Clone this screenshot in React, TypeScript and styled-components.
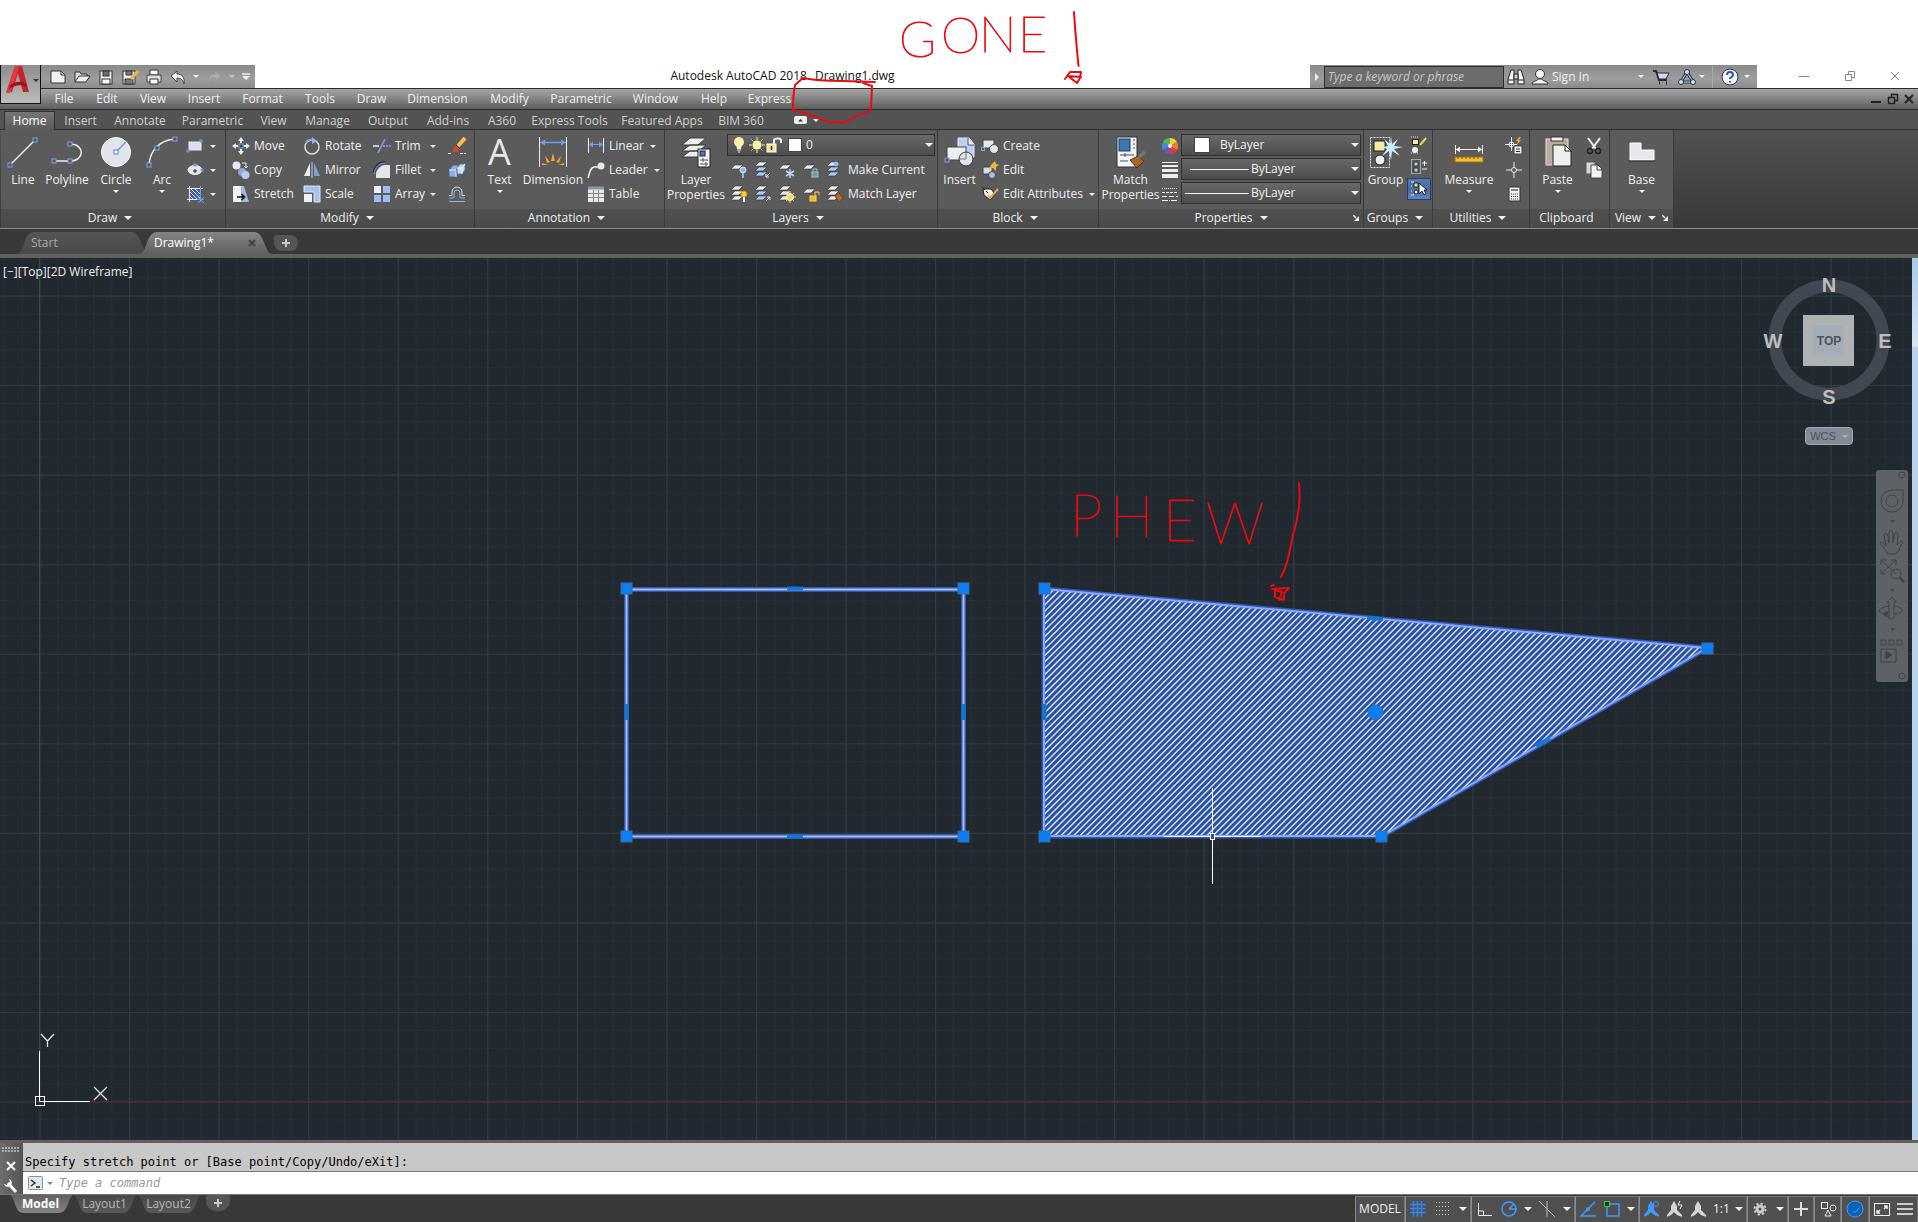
import React from "react";
import styled, { createGlobalStyle, css } from "styled-components";

const mono = `"DejaVu Sans Mono", "Liberation Mono", monospace`;

const Global = createGlobalStyle`
  *, *::before, *::after { box-sizing: border-box; }
  body { margin: 0; background: #fff; font: 12px/16px "Open Sans", "Noto Sans", sans-serif; overflow: hidden; }
  button, input, select { font: inherit; color: inherit; margin: 0; padding: 0; border: 0; background: none; }
  svg { display: block; flex: none; }
`;

/* ---------- shared parts ---------- */

const Page = styled.div`
  position: relative;
  display: flex;
  flex-direction: column;
  min-height: 100vh;
  color: #f0f0f0;
`;

const Caret = styled.span<{ $size?: number; $color?: string }>`
  flex: none;
  width: 0;
  height: 0;
  border: ${(p) => p.$size ?? 3}px solid transparent;
  border-top-color: ${(p) => p.$color ?? "#f0f0f0"};
  border-bottom-width: 0;
`;

const IconButton = styled.button<{ $w?: number; $active?: boolean }>`
  display: flex;
  align-items: center;
  justify-content: center;
  flex: none;
  width: ${(p) => p.$w ?? 24}px;
  height: 22px;
  ${(p) =>
    p.$active &&
    css`
      background: linear-gradient(#5377b5, #4a6ca6 50%, #5b86c9);
      border: 1px solid #2b3e63;
    `}
`;

const TextButton = styled.button<{ $w: number }>`
  flex: none;
  width: ${(p) => p.$w}px;
  text-align: center;
  white-space: nowrap;
`;

/* ---------- title bar ---------- */

const TitleBar = styled.header`
  display: flex;
  align-items: stretch;
  height: 88px;
  padding-top: 65px;
  background: #fff;
`;

const AppMenu = styled.button`
  position: absolute;
  z-index: 2;
  left: 0;
  top: 65px;
  display: flex;
  align-items: center;
  gap: 2px;
  width: 41px;
  height: 39px;
  padding: 0 0 8px 4px;
  border: 1px solid #111;
  border-top: 0;
  background: linear-gradient(#8d8d8d, #bcbcbc);
`;

const QuickAccess = styled.div`
  display: flex;
  align-items: center;
  width: 255px;
  padding-left: 46px;
  background: linear-gradient(#8a8a8a, #9d9d9d 60%, #8c8c8c);
`;

const WindowTitle = styled.h1`
  display: flex;
  flex: 1;
  align-items: center;
  justify-content: center;
  gap: 8px;
  margin: 0;
  padding-bottom: 2px;
  color: #111;
  font-size: 12px;
  font-weight: 400;
`;

const InfoCenter = styled.div`
  display: flex;
  align-items: center;
  width: 447px;
  background: linear-gradient(#8a8a8a, #9d9d9d 60%, #8c8c8c);
`;

const SearchBox = styled.input`
  width: 180px;
  height: 22px;
  padding: 0 3px;
  border: 1px solid #2d2d2d;
  background: #6c6c6c;
  &::placeholder { color: #c9c9c9; opacity: 1; font-style: italic; }
`;

const SignIn = styled.button`
  display: flex;
  align-items: center;
  justify-content: space-between;
  width: 92px;
`;

const Rule = styled.span`
  width: 1px;
  height: 22px;
  background: #aaa;
`;

const WindowControls = styled.div`
  display: flex;
  align-items: center;
  justify-content: space-between;
  width: 161px;
  padding: 0 17px 2px 41px;
`;

/* ---------- menu bar and ribbon ---------- */

const MenuBar = styled.nav`
  display: flex;
  align-items: center;
  height: 22px;
  padding: 0 2px 0 43px;
  border-top: 1px solid #2b2b2b;
  border-bottom: 1px solid #2b2b2b;
  background: linear-gradient(#a6a6a6, #5e5e5e);
`;

const MdiControls = styled.div`
  display: flex;
  margin-left: auto;
`;

const TabRow = styled.nav`
  display: flex;
  align-items: flex-end;
  height: 20px;
  padding-left: 4px;
  border-bottom: 1px solid #2e2e2e;
  background: #535353;
  color: #d0d0d0;
`;

const RibbonTab = styled(TextButton)<{ $active?: boolean }>`
  height: 18px;
  line-height: 16px;
  border: 1px solid transparent;
  border-bottom: 0;
  ${(p) =>
    p.$active &&
    css`
      height: 19px;
      margin-bottom: -1px;
      color: #fff;
      border-color: #303030;
      background: linear-gradient(#757575, #5b5b5b);
    `}
`;

const RibbonToggle = styled.button`
  display: flex;
  align-items: center;
  gap: 6px;
  height: 18px;
  margin-left: 22px;
`;

const Ribbon = styled.section`
  display: flex;
  height: 99px;
  padding-left: 1px;
  border-bottom: 1px solid #8a8a8a;
  background: linear-gradient(#505050, #393939);
`;

const PanelBox = styled.section<{ $w: number }>`
  display: flex;
  flex: none;
  flex-direction: column;
  width: ${(p) => p.$w}px;
  border-right: 1px solid #3b3b3b;
  background: #5b5b5b;
`;

const PanelBody = styled.div`
  display: flex;
  flex: 1;
  padding-top: 4px;
`;

const PanelTitle = styled.h2<{ $spread?: boolean }>`
  display: grid;
  grid-template-columns: ${(p) => (p.$spread ? "1fr auto 1fr" : "auto auto")};
  align-items: center;
  justify-content: center;
  column-gap: 6px;
  height: 19px;
  margin: 0;
  padding-bottom: 1px;
  font-size: 12px;
  font-weight: 400;
  background: linear-gradient(#4f4f4f, #4a4a4a);
`;

const PanelName = styled.span<{ $spread?: boolean }>`
  display: flex;
  align-items: center;
  gap: 7px;
  grid-column: ${(p) => (p.$spread ? 2 : 1)};
`;

const Launcher = styled.button<{ $spread?: boolean }>`
  justify-self: end;
  margin-right: ${(p) => (p.$spread ? 4 : 0)}px;
`;

const BigButton = styled.button<{ $w: number }>`
  display: flex;
  flex: none;
  flex-direction: column;
  align-items: center;
  width: ${(p) => p.$w}px;
  height: 72px;
  padding-top: 2px;
  line-height: 15px;
  white-space: nowrap;
  svg { margin-bottom: 4px; }
  ${Caret} { margin-top: 3px; }
`;

const LetterIcon = styled.span`
  height: 36px;
  color: #e8e8e8;
  font-size: 36px;
  line-height: 32px;
`;

const Column = styled.div<{ $w?: number; $ml?: number }>`
  display: flex;
  flex: none;
  flex-direction: column;
  width: ${(p) => (p.$w ? p.$w + "px" : "auto")};
  margin-left: ${(p) => p.$ml ?? 0}px;
`;

const ToolRow = styled.div`
  display: flex;
  align-items: center;
  height: 24px;
  gap: 6px;
  padding-left: 3px;
`;

const Tool = styled.button<{ $spread?: boolean }>`
  display: flex;
  align-items: center;
  gap: 4px;
  height: 24px;
  white-space: nowrap;
  ${Caret} { margin-left: ${(p) => (p.$spread ? "auto" : "2px")}; }
`;

const Combo = styled.label<{ $w: number }>`
  display: flex;
  align-items: center;
  width: ${(p) => p.$w}px;
  height: 22px;
  margin-bottom: 2px;
  padding: 0 1px 0 2px;
  border: 1px solid #2f2f2f;
  background: linear-gradient(#686868, #4d4d4d);
  select { flex: 1; min-width: 0; height: 20px; appearance: none; outline: 0; }
`;

const Swatch = styled.span<{ $size: number }>`
  flex: none;
  width: ${(p) => p.$size}px;
  height: ${(p) => p.$size}px;
  margin: 0 ${(p) => (p.$size > 14 ? 10 : 4)}px 0 ${(p) => (p.$size > 14 ? 10 : 4)}px;
  border: 1px solid #444;
  background: #fff;
`;

const LineSample = styled.span<{ $w: number }>`
  width: ${(p) => p.$w}px;
  height: 1px;
  margin: 0 2px 0 auto;
  background: #f4f4f4;
`;

const LineCombo = styled(Combo)`
  select { flex: none; width: 100px; }
`;

/* ---------- document tabs ---------- */

const DocTabs = styled.nav`
  display: flex;
  align-items: flex-end;
  height: 29px;
  padding-left: 17px;
  border-bottom: 4px solid #606060;
  background: #383838;
`;

const DocTab = styled.button<{ $active?: boolean }>`
  display: flex;
  align-items: center;
  justify-content: space-between;
  width: 132px;
  height: 22px;
  margin-right: -9px;
  padding: 0 15px 0 14px;
  color: ${(p) => (p.$active ? "#fff" : "#aaa")};
  background: ${(p) => (p.$active ? "linear-gradient(#858585, #606060)" : "linear-gradient(#565656, #484848)")};
  clip-path: path("M0 22 C7 21 6 0 17 0 H114 C125 0 124 21 132 22 Z");
`;

const AddTab = styled.button<{ $flip?: boolean }>`
  display: flex;
  align-items: center;
  justify-content: center;
  width: 24px;
  height: 16px;
  margin: ${(p) => (p.$flip ? "0 0 0 4px" : "0 0 3px 11px")};
  border-radius: ${(p) => (p.$flip ? "2px 2px 10px 10px" : "3px 10px 10px 10px")};
  background: #565656;
`;

/* ---------- workspace ---------- */

const Workspace = styled.main`
  display: flex;
  flex: 1;
  min-height: 0;
`;

const Canvas = styled.div`
  position: relative;
  flex: 1;
  overflow: hidden;
  background: #212830;
`;

const Drawing = styled.svg`
  position: absolute;
  inset: 0;
  width: 100%;
  height: 100%;
`;

const Backdrop = styled.div`
  width: 6px;
  background: linear-gradient(#a9c9ea, #d6e6f6 88px, #b9d3ee 90px, #b6d1ec);
`;

const ViewControls = styled.div`
  position: absolute;
  left: 3px;
  top: 6px;
  display: flex;
`;

const ViewCube = styled.div`
  position: absolute;
  right: 16px;
  top: 16px;
  display: flex;
  flex-direction: column;
  align-items: center;
  gap: 17px;
`;

const WcsButton = styled.button`
  display: flex;
  align-items: center;
  justify-content: center;
  gap: 6px;
  width: 48px;
  height: 18px;
  border: 1px solid #a3a8b0;
  border-radius: 4px;
  background: #858b96;
  color: #4a505a;
  font: 11px/14px "Liberation Sans", Arial, sans-serif;
`;

const NavBar = styled.div`
  position: absolute;
  right: 4px;
  top: 212px;
  display: flex;
  flex-direction: column;
  align-items: center;
  width: 32px;
  height: 212px;
  border-radius: 3px;
  background: #5e6267;
`;

/* ---------- command line and status ---------- */

const CommandLine = styled.section`
  display: flex;
  border-top: 3px solid #5f6164;
  border-bottom: 1px solid #777;
  font-family: ${mono};
  color: #000;
`;

const CommandGrip = styled.div`
  display: flex;
  flex-direction: column;
  align-items: center;
  justify-content: space-between;
  width: 23px;
  height: 51px;
  padding: 4px 2px 0 0;
  background: linear-gradient(90deg, #6d6d6d, #555);
`;

const CommandBody = styled.div`
  flex: 1;
  background: #fff;
`;

const History = styled.output`
  display: block;
  height: 29px;
  padding: 11px 0 0 2px;
  border-bottom: 1px solid #777;
  background: #c8c8c8;
`;

const Prompt = styled.label`
  display: flex;
  align-items: center;
  gap: 4px;
  height: 22px;
  padding-left: 5px;
  input { flex: 1; margin-left: 2px; outline: 0; }
  input::placeholder { color: #999; opacity: 1; font-style: italic; }
`;

const Footer = styled.footer`
  display: flex;
  align-items: flex-start;
  height: 27px;
  padding-left: 10px;
  background: #383838;
`;

const LayoutTab = styled.button<{ $active?: boolean }>`
  width: 70px;
  height: 18px;
  margin-right: -6px;
  padding-right: 9px;
  color: ${(p) => (p.$active ? "#fff" : "#b5b5b5")};
  font-weight: ${(p) => (p.$active ? 700 : 400)};
  background: ${(p) => (p.$active ? "linear-gradient(#606060, #858585)" : "linear-gradient(#484848, #585858)")};
  clip-path: path("M0 0 C6 4 4 18 14 18 H48 C59 18 57 4 63 0 Z");
`;

const StatusBar = styled.div`
  display: flex;
  height: 26px;
  margin: 1px 0 0 auto;
  background: #505050;
`;

const StatusGroup = styled.div<{ $w: number }>`
  display: flex;
  align-items: center;
  justify-content: space-around;
  width: ${(p) => p.$w}px;
  padding-bottom: 1px;
  border: 1px solid #777;
  border-bottom: 0;
  border-left-color: #8b8b8b;
`;

const Ink = styled.svg`
  position: absolute;
  z-index: 3;
  inset: 0;
  width: 100%;
  height: 100%;
  pointer-events: none;
  fill: none;
  stroke: #e80c12;
  stroke-width: 2;
  stroke-linecap: round;
  stroke-linejoin: round;
`;

const InkText = styled.text`
  fill: #e80c12;
  stroke-width: 1;
  font-family: Lato, "Open Sans", sans-serif;
  font-weight: 100;
`;

/* ---------- icons ---------- */

type IconProps = { s?: number; w?: number; h?: number; children: React.ReactNode };
const Icon = ({ s = 18, w, h, children }: IconProps) => (
  <svg width={w ?? s} height={h ?? s} viewBox={`0 0 ${w ?? s} ${h ?? s}`} fill="none" stroke="#eee" aria-hidden="true">
    {children}
  </svg>
);

const Node = ({ x, y, r = 2 }: { x: number; y: number; r?: number }) => (
  <rect x={x - r} y={y - r} width={r * 2} height={r * 2} fill="#4b5568" stroke="#7ea4ee" />
);

const LineIcon = () => (
  <Icon s={32}><path d="M3 29 L28 4" strokeWidth="1.5" /><Node x={3} y={29} /><Node x={28} y={4} /></Icon>
);
const PolylineIcon = () => (
  <Icon s={32}><path d="M3 25 H19 C34 25 34 8 19 8" strokeWidth="1.5" /><Node x={3} y={25} /><Node x={19} y={25} /><Node x={19} y={8} /></Icon>
);
const CircleIcon = () => (
  <Icon s={32}>
    <circle cx="16" cy="16" r="14.5" fill="#e2e4ea" stroke="#fff" />
    <path d="M16 16 L26 6" stroke="#6c94dc" strokeWidth="1.5" />
    <rect x="14" y="14" width="4" height="4" fill="#fff" stroke="#5580d0" />
  </Icon>
);
const ArcIcon = () => (
  <Icon s={32}><path d="M3 29 C4 14 14 4 29 3" strokeWidth="1.5" /><Node x={3} y={29} /><Node x={11} y={12} /><Node x={29} y={3} /></Icon>
);
const RectIcon = () => (
  <Icon><rect x="3" y="5" width="12" height="8" fill="#dcdfe6" /><Node x={2} y={14} r={1} /><Node x={15} y={4} r={1} /></Icon>
);
const EllipseIcon = () => (
  <Icon><ellipse cx="9" cy="9" rx="7" ry="4.5" fill="#e4e6ec" /><path d="M7 10h4M9 8v4" stroke="#222" /><Node x={9} y={4} r={1} /><Node x={16} y={9} r={1} /></Icon>
);
const HatchIcon = () => (
  <Icon>
    <rect x="4" y="4" width="10" height="10" fill="#3d63ab" stroke="none" />
    <path d="M5 4l9 9M9 4l5 5M4 7l7 7M4 11l3 3" stroke="#cfe0ff" />
    <path d="M1 3.5h16M3.5 1v16M1 14.5h12" />
    <path d="M14.5 1v16M11 14.5h7M12 12l6 6M18 12l-6 6" stroke="#6f9ee8" />
  </Icon>
);
const MoveIcon = () => (
  <Icon>
    <path d="M9 0l3 4H6zM9 18l3-4H6zM0 9l4-3v6zM18 9l-4-3v6z" fill="#e6e6e6" stroke="none" />
    <path d="M9 3v3M9 12v3M3 9h3M12 9h3" strokeWidth="2" />
    <rect x="7" y="7" width="4" height="4" fill="#345" stroke="#7ea4ee" />
  </Icon>
);
const CopyIcon = () => (
  <Icon>
    <circle cx="4.5" cy="4.5" r="4" fill="#e8e8e8" stroke="none" />
    <circle cx="10" cy="11" r="4" fill="#8ba6d8" stroke="none" />
    <circle cx="13.5" cy="14" r="4" fill="#b5cbf2" stroke="none" />
    <path d="M10 2h4v4M12 5l2 2 2-2" />
  </Icon>
);
const StretchIcon = () => (
  <Icon><path d="M1 1h8v16H1z" fill="#f2f2f2" stroke="none" /><path d="M9 1h3l5 16H9z" fill="#9db8e4" stroke="none" /><path d="M5 12h7M9.5 9l3 3-3 3" stroke="#111" strokeWidth="1.6" /></Icon>
);
const RotateIcon = () => (
  <Icon><circle cx="9" cy="10" r="7" stroke="#ddd" strokeWidth="1.5" /><path d="M3 5C5 2 9 2 11 4" stroke="#6f9ee8" strokeWidth="2" /><path d="M9 0l5 4-5 3z" fill="#8fb4f0" stroke="none" /></Icon>
);
const MirrorIcon = () => (
  <Icon><path d="M7 2v13H1z" fill="#eee" stroke="none" /><path d="M11 2v13h6z" fill="#7f9fd0" stroke="none" /><path d="M9 1v16" stroke="#b8d0f5" /></Icon>
);
const ScaleIcon = () => (
  <Icon><path d="M1 1h16v16h-6V7H1z" fill="#a9c2ec" stroke="#dce8ff" /><rect x="1" y="9" width="8" height="8" fill="#f0f0f0" stroke="none" /></Icon>
);
const TrimIcon = () => (
  <Icon><path d="M0 9h6" strokeWidth="1.5" /><path d="M5 16L12 2" stroke="#7ea4ee" strokeWidth="1.5" /><path d="M10 9h8" stroke="#7ea4ee" strokeWidth="1.5" strokeDasharray="2 1" /></Icon>
);
const FilletIcon = () => (
  <Icon><path d="M3 17v-4C3 9 8 4 12 4h5v13z" fill="#e6e6ea" stroke="none" /><path d="M1 12C1 6 6 1 12 1" stroke="#1e2c49" strokeWidth="2" /><path d="M1 13C2 6 6 2 12 2" stroke="#88aaea" /></Icon>
);
const ArrayIcon = () => (
  <Icon><rect x="1" y="1" width="7" height="7" fill="#f0f0f0" stroke="none" /><path d="M10 1h7v7h-7zM1 10h7v7H1zM10 10h7v7h-7z" fill="#9dbcf2" stroke="none" /></Icon>
);
const EraseIcon = () => (
  <Icon><path d="M17 1l-7 8" stroke="#f2c14a" strokeWidth="4" /><path d="M8 8l4 4-3 3H4z" fill="#e0432b" stroke="none" /><path d="M8 8l4 4" stroke="#222" /><path d="M0 16.5h4M12 16.5h6" strokeDasharray="3 1" /></Icon>
);
const ExplodeIcon = () => (
  <Icon>
    <path d="M1 9l4-5h6l-2 4v8H1z" fill="#8fb0df" stroke="#4a6288" /><path d="M1 9h7v7" stroke="#dce9ff" />
    <path d="M9 7l3-4h5v6l-3 4H9z" fill="#c4d7f4" stroke="#5b7298" /><path d="M9 7h5v6M14 7l3-4" stroke="#f0f5ff" />
  </Icon>
);
const OffsetIcon = () => (
  <Icon><path d="M1 16.5h16M1 13h4c2 0 1-2 1-5a3 3 0 0 1 6 0c0 3-1 5 1 5h4" stroke="#8fb4f0" /><path d="M1 10.500h3V7a5 5 0 0 1 10 0v3.500h3" stroke="#ddd" /></Icon>
);
const DimensionIcon = () => (
  <Icon s={32}>
    <path d="M2.5 1v30M29.5 1v30" />
    <path d="M3 6.5h26" stroke="#6f9ee8" strokeWidth="1.5" /><path d="M3 6.5l5-3v6zM29 6.5l-5-3v6z" fill="#6f9ee8" stroke="none" />
    <path d="M16 17l2 8h-4zM8 20l5 6-3 1zM24 20l-5 6 3 1zM5 27l6 2H5zM27 27l-6 2h6z" fill="#f5a623" stroke="none" />
  </Icon>
);
const LinearIcon = () => (
  <Icon><path d="M1.5 1v15M16.5 1v15" /><path d="M3 7.5h12" stroke="#6f9ee8" /><path d="M2 7.5l4-3v6zM16 7.5l-4-3v6z" fill="#6f9ee8" stroke="none" /></Icon>
);
const LeaderIcon = () => (
  <Icon><path d="M1 17c2-6 2-10 6-11h5" strokeWidth="1.5" /><circle cx="14" cy="5" r="3.5" fill="#e8e8e8" stroke="none" /></Icon>
);
const TableIcon = () => (
  <Icon><path d="M1 2h16v15H1z" fill="#e8e8e8" stroke="none" /><path d="M1 3h16" stroke="#8b97ab" strokeWidth="3" /><path d="M1 8.5h16M1 12.5h16M6.5 5v12M11.5 5v12" stroke="#888" /></Icon>
);
const Sheet = ({ x = 0, y = 0, fill = "#eee" }) => (
  <path d={`M${x + 4} ${y}h8l-4 4h-8z`} fill={fill} stroke="#333" strokeWidth=".6" />
);
const LayerPropsIcon = () => (
  <Icon s={32}>
    <path d="M10 15h16l-7 6H2zM10 9h16l-7 6H2zM10 2h16l-8 7H2z" fill="#eee" stroke="#3a3a3a" />
    <rect x="18" y="13" width="12" height="18" fill="#f4f4f4" stroke="#222" />
    <rect x="20" y="15" width="5" height="5" fill="#4d78bd" stroke="#223" /><path d="M20 24h8M20 28h8M23 22v4M26 26v4" stroke="#556" />
  </Icon>
);
const layerBadge: Record<string, React.ReactNode> = {
  pin: <><circle cx="13" cy="9" r="3" fill="#8fb8f5" stroke="#cfe2ff" /><path d="M13 12v5" stroke="#8fb8f5" strokeWidth="2" /></>,
  iso: <path d="M16 12l-4 4M12 13v3h3" />,
  snow: <path d="M12 8v9M8 10l8 5M8 15l8-5" stroke="#b7d6ff" strokeWidth="1.5" />,
  lock: <><rect x="10" y="11" width="6" height="5" fill="#6d9a91" stroke="#9cc" /><path d="M11 11V8h4v3" stroke="#9cc" /></>,
  bulb: <><circle cx="14" cy="9" r="3" fill="#ffc83d" stroke="#d98d12" /><path d="M14 12v5" stroke="#eee" strokeWidth="2" /></>,
  out: <path d="M12 16l4-4M13 12h3v3" />,
  sun: <><circle cx="12" cy="12" r="3.5" fill="#ffd84a" stroke="#fff" /><path d="M12 6v2M12 16v2M6 12h2M16 12h2M8 8l1 1M16 8l-1 1M8 16l1-1M16 16l-1-1" stroke="#ffd84a" /></>,
  unlock: <><rect x="8" y="11" width="6" height="5" fill="#e8b62c" stroke="#ffd84a" /><path d="M13 11V7h4v3" stroke="#ffd84a" /></>,
  current: <circle cx="10" cy="3" r="2.5" fill="#8fb8f5" stroke="none" />,
  match: <path d="M9 11l4-3 4 5-4 4z" fill="#b86a28" stroke="#7a3e10" />,
};
const LayerIcon = ({ kind, thin, tint = "#eee" }: { kind: string; thin?: boolean; tint?: string }) => (
  <Icon>
    {thin ? <Sheet x={1} y={4} /> : <><Sheet x={1} y={11} fill={tint} /><Sheet x={1} y={6} fill={tint} /><Sheet x={1} y={1} /></>}
    {layerBadge[kind]}
  </Icon>
);
const BulbIcon = () => (
  <Icon><circle cx="9" cy="6" r="5" fill="#ffeeaa" stroke="none" /><path d="M6 8h6l-1 5H7z" fill="#ffeeaa" stroke="none" /><path d="M7 14h4M8 16h2" /></Icon>
);
const SunIcon = () => (
  <Icon><circle cx="9" cy="9" r="4.5" fill="#fff0a8" stroke="none" /><path d="M9 1v3M9 14v3M1 9h3M14 9h3M3.5 3.5l2 2M12.5 12.5l2 2M14.5 3.5l-2 2M5.5 12.5l-2 2" stroke="#fff0a8" /></Icon>
);
const UnlockIcon = () => (
  <Icon><rect x="1" y="8" width="9" height="8" fill="#f6e08a" stroke="#fff" /><path d="M8 8V4c0-2 7-2 7 0v3" stroke="#f2f2f2" strokeWidth="2" /><path d="M5.5 10v4" stroke="#333" strokeWidth="1.5" /></Icon>
);
const InsertIcon = () => (
  <Icon s={32}>
    <path d="M14 2h11l5 6v13H14z" fill="#b9d0f2" stroke="#dce9ff" /><path d="M24 2v7h6" fill="#eaf2ff" stroke="#557" />
    <rect x="3" y="11" width="19" height="13" fill="#eceef2" stroke="#444" /><circle cx="22" cy="23" r="7" fill="#e0e3ea" stroke="#333" />
    <path d="M22 23v-7M22 23h-7" stroke="#777" /><Node x={3} y={24} />
  </Icon>
);
const CreateIcon = () => (
  <Icon><rect x="2" y="3" width="11" height="8" fill="#e6e8ee" stroke="#444" /><circle cx="13" cy="12" r="4.5" fill="#dfe2ea" stroke="#444" /><Node x={2} y={12} r={1.5} /></Icon>
);
const EditIcon = () => (
  <Icon><rect x="2" y="6" width="9" height="7" fill="#d8dce6" stroke="#444" /><circle cx="11" cy="14" r="3.5" fill="#a8c0ea" stroke="#444" /><path d="M14 0l1 3 3 1-3 2v4l-3-3-4 1 2-4z" fill="#f3b33d" stroke="none" /></Icon>
);
const AttrIcon = () => (
  <Icon><path d="M2 4h8l4 5-5 6-6-5z" fill="#f2f2f2" stroke="#222" /><path d="M5 6l2 2M1 2l3 3" stroke="#222" /><path d="M17 4l-8 9-2-3" stroke="#e6aa45" strokeWidth="2" /></Icon>
);
const MatchIcon = () => (
  <Icon s={32}>
    <rect x="2" y="1" width="20" height="30" fill="#f4f4f4" stroke="#333" /><rect x="4" y="3" width="11" height="12" fill="#3e75b5" stroke="#1d3b63" />
    <path d="M18 4h2M18 8h2M18 12h2M5 19h14M5 25h8M10 17v4" stroke="#446" />
    <path d="M15 24l8-4 6 5-7 7z" fill="#a8652a" stroke="#5e3410" /><path d="M24 21l6-5" stroke="#777" strokeWidth="3" />
  </Icon>
);
const WheelIcon = () => (
  <Icon s={16}>
    <g stroke="none">
      <path d="M8 8V0a8 8 0 0 1 7 4z" fill="#f4d33a" /><path d="M8 8l7-4a8 8 0 0 1 0 8z" fill="#ef7d2c" /><path d="M8 8l7 4a8 8 0 0 1-7 4z" fill="#d93a4a" />
      <path d="M8 8v8a8 8 0 0 1-7-4z" fill="#7350b8" /><path d="M8 8l-7 4a8 8 0 0 1 0-8z" fill="#3e8be0" /><path d="M8 8L1 4a8 8 0 0 1 7-4z" fill="#56b857" />
      <circle cx="8" cy="8" r="2" fill="#eee" />
    </g>
  </Icon>
);
const WeightIcon = () => (
  <Icon s={16}><path d="M0 .5h16" /><path d="M0 4h16" strokeWidth="2" /><path d="M0 8.500h16" strokeWidth="3" /><path d="M0 14h16" strokeWidth="4" /></Icon>
);
const LinetypeIcon = () => (
  <Icon s={16}><path d="M0 2.5h16" strokeDasharray="1 1" /><path d="M0 6.5h16" strokeDasharray="3 1" /><path d="M0 10.5h16" strokeDasharray="5 2" /><path d="M0 14.500h16" strokeDasharray="6 1 1 1" /></Icon>
);
const GroupIcon = () => (
  <Icon w={34} h={32}>
    <path d="M1.5 1.5h19v30h-19z" strokeDasharray="2 1" /><rect x="5" y="5" width="11" height="10" fill="#f3eba0" stroke="#222" />
    <circle cx="11" cy="24" r="5" fill="#eee" stroke="#222" />
    <path d="M22 0l1 8 6-5-4 7 9 1-9 2 6 7-8-5-1 9-2-9-7 5 5-7-5-2 6-1-4-7 6 5z" fill="#c5ecff" stroke="none" />
  </Icon>
);
const UngroupIcon = () => (
  <Icon><path d="M1 1h7M1 17h8" strokeDasharray="1 1" /><rect x="2.5" y="3.5" width="6" height="5" fill="#f3eba0" stroke="#222" /><circle cx="5" cy="14" r="3" fill="#eee" stroke="none" /><path d="M16 2l-6 7" stroke="#e9d36a" strokeWidth="2" /></Icon>
);
const GroupEditIcon = () => (
  <Icon><path d="M1.5 1.5h9v14h-9z" strokeDasharray="1 1" /><path d="M4 4h4v4H4zM4 10h4v4H4z" fill="#b9d3f7" stroke="#333" /><path d="M12 5h5M14.5 3v5M12 11h5" /></Icon>
);
const GroupSelIcon = () => (
  <Icon><path d="M1 2h3M1 6h1M1 11h1M1 15h3" /><path d="M4 3h4v4H4z" fill="#f3eba0" stroke="#222" /><circle cx="6" cy="12" r="2" fill="#eee" stroke="#222" /><path d="M9 3v11l3-3 2 4 2-1-2-4h3z" fill="#fff" stroke="#222" /></Icon>
);
const MeasureIcon = () => (
  <Icon s={32}><path d="M2.5 9v9M29.5 9v9M3 13.5h26" /><path d="M3 13.5l4-3v6zM29 13.5l-4-3v6z" fill="#eee" stroke="none" /><rect x="2" y="21" width="28" height="5" fill="#f4bf35" stroke="#a86f10" /><path d="M5 21v2M9 21v2M13 21v2M17 21v2M21 21v2M25 21v2" stroke="#7c5208" /></Icon>
);
const QuickSelectIcon = () => (
  <Icon><path d="M6.5 0v14M0 7.5h12" /><circle cx="6.5" cy="7.5" r="2.5" /><path d="M14 0l-3 4h2l-1 4 4-5h-2l2-3z" fill="#f5a03a" stroke="none" /><rect x="9" y="9" width="8" height="8" fill="#eee" stroke="#444" /><path d="M11 12h4M11 14.5h4" stroke="#333" /></Icon>
);
const PointIcon = () => (
  <Icon><path d="M9 1v5M9 12v5M1 9h5M12 9h5" /><circle cx="9" cy="9" r="2.5" /></Icon>
);
const CalcIcon = () => (
  <Icon><rect x="4" y="2" width="11" height="14" fill="#eee" stroke="#333" /><rect x="6" y="4" width="7" height="2" fill="#888" stroke="none" /><path d="M6 9h7M6 11.5h7M6 14h7" stroke="#444" strokeDasharray="1 1" /></Icon>
);
const PasteIcon = () => (
  <Icon s={32}><rect x="4" y="3" width="22" height="26" fill="#b9ada0" stroke="#e8e0d8" /><rect x="9" y="1" width="12" height="4" fill="#f4f4f4" stroke="#333" /><path d="M11 9h12l6 6v15H11z" fill="#eee" stroke="#222" /><path d="M23 9v6h6" stroke="#222" /></Icon>
);
const CutIcon = () => (
  <Icon><path d="M3 1l8 11M15 1L7 12" strokeWidth="2" /><circle cx="5" cy="14" r="2.5" stroke="#222" strokeWidth="1.5" /><circle cx="13" cy="14" r="2.5" stroke="#222" strokeWidth="1.5" /></Icon>
);
const PagesIcon = () => (
  <Icon><path d="M1 1h9v12H1z" fill="#d8d8d8" stroke="#555" /><path d="M6 4h7l4 4v9H6z" fill="#f4f4f4" stroke="#444" /><path d="M12 4v5h5" stroke="#444" /></Icon>
);
const BaseIcon = () => (
  <Icon s={32}><path d="M4 7h11v7h13v10H4z" fill="#e6e7ea" stroke="#fff" /><path d="M3 25h26" stroke="#333" /></Icon>
);
const LaunchIcon = () => (
  <Icon s={6}><path d="M0 0l3 3" strokeWidth="1.5" /><path d="M6 1v5H1z" fill="#eee" stroke="none" /></Icon>
);

const Logo = () => (
  <Icon w={26} h={30}>
    <g stroke="none">
      <path d="M10 1h7l7 26h-6l-5-19-6 19-6 1z" fill="#c5222a" />
      <path d="M10 1h4L6 27l-5 1z" fill="#e23a3c" /><path d="M5 20c6-4 11-4 16-2l1 4c-6-3-12-2-18 2z" fill="#9d141c" />
    </g>
  </Icon>
);
const NewIcon = () => (<Icon><path d="M2 3h10l4 4v8H2z" fill="#f2f2f2" stroke="#333" /><path d="M12 3v4h4" stroke="#333" /></Icon>);
const OpenIcon = () => (<Icon><path d="M2 14V4h5l1 2h6v2" fill="#ddd" stroke="#333" /><path d="M2 14l4-6h11l-4 6z" fill="#f0f0f0" stroke="#333" /></Icon>);
const SaveIcon = () => (<Icon><rect x="3" y="3" width="12" height="13" fill="#eee" stroke="#333" /><rect x="6" y="3" width="6" height="5" fill="#666b75" stroke="#333" /><rect x="5" y="11" width="8" height="5" fill="#fff" stroke="#333" /></Icon>);
const SaveAsIcon = () => (<Icon><rect x="2" y="3" width="12" height="13" fill="#eee" stroke="#333" /><path d="M5 3h6v4H5zM4 11h8v5H4z" fill="#777b85" stroke="#333" /><path d="M17 3l-7 8" stroke="#f2b440" strokeWidth="3" /></Icon>);
const PrintIcon = () => (<Icon><path d="M5 2h8v5H5z" fill="#fff" stroke="#333" /><path d="M2 7h14v7H2z" fill="#ddd" stroke="#444" /><path d="M5 11h8v5H5z" fill="#fff" stroke="#333" /></Icon>);
const UndoIcon = ({ flip, c = "#f0f0f0" }: { flip?: boolean; c?: string }) => (
  <Icon><path transform={flip ? "translate(18 0) scale(-1 1)" : undefined} d="M8 3v3c5 0 8 3 7 10-1-4-3-6-7-6v4L2 8z" fill={c} stroke={flip ? "#999" : "#444"} /></Icon>
);
const BinocularsIcon = () => (
  <Icon><path d="M3 5l1-3h3v14H1v-5zM15 5l-1-3h-3v14h6v-5z" fill="#f2f2f2" stroke="#222" /><path d="M7 6h4v5H7z" fill="#ccc" stroke="#222" /><path d="M1 12h6M11 12h6" stroke="#222" /></Icon>
);
const PersonIcon = () => (<Icon><circle cx="9" cy="6" r="4.5" fill="#f2f2f2" stroke="#333" /><path d="M1 16c1-4 5-2 6-5h4c1 3 5 1 6 5z" fill="#f2f2f2" stroke="#333" /></Icon>);
const CartIcon = () => (<Icon><path d="M1 3h3l3 9h8" stroke="#222a3d" strokeWidth="2" /><path d="M5 5h12l-3 6H7z" fill="#cfd8e8" stroke="#222a3d" /><path d="M7 15h1M14 15h1" stroke="#222a3d" strokeWidth="3" /></Icon>);
const A360Icon = () => (
  <Icon>
    <path d="M9 4l6 10H3z" stroke="#27324c" strokeWidth="3" /><path d="M9 4l6 10H3z" stroke="#d5deef" />
    <g fill="#d5deef" stroke="#27324c"><circle cx="9" cy="4" r="2.500" /><circle cx="3" cy="14" r="2.500" /><circle cx="15" cy="14" r="2.500" /></g>
  </Icon>
);
const HelpIcon = () => (
  <Icon><circle cx="9" cy="9" r="8" fill="#f2f4fa" stroke="#26334f" /><path d="M6 7c0-4 6-4 6 0 0 2-3 2-3 4M9 13v1.5" stroke="#2c54b5" strokeWidth="2" /></Icon>
);

const CrossIcon = ({ c = "#fff", s = 12, sw = 2 }: { c?: string; s?: number; sw?: number }) => (
  <Icon s={s}><path d={`M2 2L${s - 2} ${s - 2}M${s - 2} 2L2 ${s - 2}`} stroke={c} strokeWidth={sw} /></Icon>
);
const RestoreIcon = ({ c, sw = 1 }: { c: string; sw?: number }) => (
  <Icon s={12}><path d="M1.5 4.5h6v6h-6zM4.5 4V1.5h6v6H8" stroke={c} strokeWidth={sw} /></Icon>
);
const MinIcon = ({ c, sw = 1 }: { c: string; sw?: number }) => (
  <Icon s={12}><path d={`M1 ${sw > 1 ? 9 : 6.5}h10`} stroke={c} strokeWidth={sw} /></Icon>
);
const PlusIcon = ({ s = 10, c = "#c8c8c8" }: { s?: number; c?: string }) => (
  <Icon s={s}><path d={`M${s / 2} 1v${s - 2}M1 ${s / 2}h${s - 2}`} stroke={c} strokeWidth="2" /></Icon>
);

/* ---------- ribbon content ---------- */

type PanelProps = { title: string; w: number; caret?: boolean; launch?: "end" | "inline"; children: React.ReactNode };
const Panel = ({ title, w, caret = true, launch, children }: PanelProps) => {
  const spread = launch === "end";
  return (
    <PanelBox $w={w}>
      <PanelBody>{children}</PanelBody>
      <PanelTitle $spread={spread}>
        <PanelName $spread={spread}>
          {title}
          {caret && <Caret $size={4} />}
        </PanelName>
        {launch && <Launcher $spread={spread} aria-label={`${title} settings`}><LaunchIcon /></Launcher>}
      </PanelTitle>
    </PanelBox>
  );
};

type BigProps = { icon: React.ReactNode; lines: string[]; w: number; caret?: boolean };
const Big = ({ icon, lines, w, caret }: BigProps) => (
  <BigButton $w={w}>
    {icon}
    {lines.map((l) => <span key={l}>{l}</span>)}
    {caret && <Caret />}
  </BigButton>
);

type SmallProps = { icon: React.ReactNode; label?: string; name?: string; caret?: boolean; spread?: boolean };
const Small = ({ icon, label, name, caret, spread }: SmallProps) => (
  <Tool aria-label={label ? undefined : name} $spread={spread}>
    {icon}
    {label}
    {caret && <Caret />}
  </Tool>
);

const menus: [string, number][] = [
  ["File", 42], ["Edit", 44], ["View", 48], ["Insert", 54], ["Format", 63], ["Tools", 52], ["Draw", 51],
  ["Dimension", 81], ["Modify", 63], ["Parametric", 80], ["Window", 69], ["Help", 48], ["Express", 63],
];

const tabs: [string, number][] = [
  ["Home", 51], ["Insert", 51], ["Annotate", 68], ["Parametric", 77], ["View", 45], ["Manage", 63], ["Output", 58],
  ["Add-ins", 62], ["A360", 46], ["Express Tools", 89], ["Featured Apps", 96], ["BIM 360", 62],
];

const RibbonPanels = () => (
  <Ribbon>
    <Panel title="Draw" w={225}>
      <Big icon={<LineIcon />} lines={["Line"]} w={44} />
      <Big icon={<PolylineIcon />} lines={["Polyline"]} w={44} />
      <Big icon={<CircleIcon />} lines={["Circle"]} w={54} caret />
      <Big icon={<ArcIcon />} lines={["Arc"]} w={38} caret />
      <Column $ml={5}>
        <Small icon={<RectIcon />} name="Rectangle" caret />
        <Small icon={<EllipseIcon />} name="Ellipse" caret />
        <Small icon={<HatchIcon />} name="Hatch" caret />
      </Column>
    </Panel>
    <Panel title="Modify" w={249}>
      <Column $w={71} $ml={6}>
        <Small icon={<MoveIcon />} label="Move" />
        <Small icon={<CopyIcon />} label="Copy" />
        <Small icon={<StretchIcon />} label="Stretch" />
      </Column>
      <Column $w={70}>
        <Small icon={<RotateIcon />} label="Rotate" />
        <Small icon={<MirrorIcon />} label="Mirror" />
        <Small icon={<ScaleIcon />} label="Scale" />
      </Column>
      <Column $w={63}>
        <Small icon={<TrimIcon />} label="Trim" caret spread />
        <Small icon={<FilletIcon />} label="Fillet" caret spread />
        <Small icon={<ArrayIcon />} label="Array" caret spread />
      </Column>
      <Column $ml={12}>
        <Small icon={<EraseIcon />} name="Erase" />
        <Small icon={<ExplodeIcon />} name="Explode" />
        <Small icon={<OffsetIcon />} name="Offset" />
      </Column>
    </Panel>
    <Panel title="Annotation" w={190}>
      <Big icon={<LetterIcon aria-hidden="true">A</LetterIcon>} lines={["Text"]} w={49} caret />
      <Big icon={<DimensionIcon />} lines={["Dimension"]} w={58} />
      <Column $ml={5}>
        <Small icon={<LinearIcon />} label="Linear" caret />
        <Small icon={<LeaderIcon />} label="Leader" caret />
        <Small icon={<TableIcon />} label="Table" />
      </Column>
    </Panel>
    <Panel title="Layers" w={273}>
      <Big icon={<LayerPropsIcon />} lines={["Layer", "Properties"]} w={62} />
      <Column>
        <Combo $w={208}>
          <BulbIcon /><SunIcon /><UnlockIcon /><Swatch $size={14} />
          <select aria-label="Current layer"><option>0</option></select>
          <Caret $size={4} />
        </Combo>
        <ToolRow>
          <LayerIcon kind="pin" thin /><LayerIcon kind="iso" tint="#a9c8f5" /><LayerIcon kind="snow" thin /><LayerIcon kind="lock" thin />
          <Small icon={<LayerIcon kind="current" tint="#a9c8f5" />} label="Make Current" />
        </ToolRow>
        <ToolRow>
          <LayerIcon kind="bulb" /><LayerIcon kind="out" tint="#a9c8f5" /><LayerIcon kind="sun" /><LayerIcon kind="unlock" thin />
          <Small icon={<LayerIcon kind="match" />} label="Match Layer" />
        </ToolRow>
      </Column>
    </Panel>
    <Panel title="Block" w={161}>
      <Big icon={<InsertIcon />} lines={["Insert"]} w={43} />
      <Column>
        <Small icon={<CreateIcon />} label="Create" />
        <Small icon={<EditIcon />} label="Edit" />
        <Small icon={<AttrIcon />} label="Edit Attributes" caret />
      </Column>
    </Panel>
    <Panel title="Properties" w={265} launch="end">
      <Big icon={<MatchIcon />} lines={["Match", "Properties"]} w={63} />
      <Column $w={19}>
        <Small icon={<WheelIcon />} name="Object color" />
        <Small icon={<WeightIcon />} name="Lineweight" />
        <Small icon={<LinetypeIcon />} name="Linetype" />
      </Column>
      <Column>
        <Combo $w={180}><Swatch $size={16} /><select aria-label="Color"><option>ByLayer</option></select><Caret $size={4} /></Combo>
        <LineCombo $w={180}><LineSample $w={59} /><select aria-label="Lineweight"><option>ByLayer</option></select><Caret $size={4} /></LineCombo>
        <LineCombo $w={180}><LineSample $w={64} /><select aria-label="Linetype"><option>ByLayer</option></select><Caret $size={4} /></LineCombo>
      </Column>
    </Panel>
    <Panel title="Groups" w={69}>
      <Big icon={<GroupIcon />} lines={["Group"]} w={43} />
      <Column>
        <IconButton aria-label="Ungroup"><UngroupIcon /></IconButton>
        <IconButton aria-label="Group edit"><GroupEditIcon /></IconButton>
        <IconButton aria-label="Group selection" $active><GroupSelIcon /></IconButton>
      </Column>
    </Panel>
    <Panel title="Utilities" w={97}>
      <Big icon={<MeasureIcon />} lines={["Measure"]} w={72} caret />
      <Column>
        <Small icon={<QuickSelectIcon />} name="Quick select" />
        <Small icon={<PointIcon />} name="Point style" />
        <Small icon={<CalcIcon />} name="Quick calculator" />
      </Column>
    </Panel>
    <Panel title="Clipboard" w={80} caret={false}>
      <Big icon={<PasteIcon />} lines={["Paste"]} w={55} caret />
      <Column>
        <Small icon={<CutIcon />} name="Cut" />
        <Small icon={<PagesIcon />} name="Copy clip" />
      </Column>
    </Panel>
    <Panel title="View" w={64} launch="inline">
      <Big icon={<BaseIcon />} lines={["Base"]} w={63} caret />
    </Panel>
  </Ribbon>
);

/* ---------- model space ---------- */

const ORIGIN = { x: 39.5, y: 843.5 };
const MAJOR = 89.55;
const HATCH_STEP = 19 / 3;
const hatchLines = Array.from({ length: 150 }, (_, i) => {
  const x = 1040 + i * HATCH_STEP;
  return `M${x.toFixed(2)} 320L${(x - 270).toFixed(2)} 590`;
}).join("");
const SHAPE = "M1044 331L1707 390L1382 578H1044Z";

const Grip = ({ x, y }: { x: number; y: number }) => (
  <rect x={x - 5.5} y={y - 5.5} width="11" height="11" fill="#0a7ff5" stroke="#3d6c9c" />
);
const EdgeGrip = ({ x, y, a = 0 }: { x: number; y: number; a?: number }) => (
  <rect x={x - 8} y={y - 2} width="16" height="4" fill="#1676d6" transform={`rotate(${a} ${x} ${y})`} />
);

const ModelSpace = () => (
  <Drawing aria-label="Model space">
    <defs>
      <pattern id="minor" x={ORIGIN.x} y={ORIGIN.y} width={MAJOR / 5} height={MAJOR / 5} patternUnits="userSpaceOnUse">
        <path d={`M.5 0V${MAJOR}M0 .5H${MAJOR}`} stroke="#262e36" />
      </pattern>
      <pattern id="major" x={ORIGIN.x} y={ORIGIN.y} width={MAJOR} height={MAJOR} patternUnits="userSpaceOnUse">
        <path d={`M.5 0V${MAJOR}M0 .5H${MAJOR}`} stroke="#323b43" />
      </pattern>
      <clipPath id="shape"><path d={SHAPE} /></clipPath>
    </defs>
    <rect width="100%" height="100%" fill="url(#minor)" />
    <rect width="100%" height="100%" fill="url(#major)" />
    <path d="M39.5 0V843" stroke="#27592f" />
    <path d="M39 843.5H1912" stroke="#5c2833" />

    <g fill="none">
      <rect x="626.5" y="331.5" width="337" height="247" stroke="#2f55a8" strokeWidth="5" />
      <rect x="626.5" y="331.5" width="337" height="247" stroke="#a9c0ff" strokeWidth="2" />
      <path d={SHAPE} fill="#2b509f" stroke="#3359b0" strokeWidth="5" />
      <g clipPath="url(#shape)"><path d={hatchLines} stroke="#cfe0ff" strokeWidth="1.5" /></g>
      <path d={SHAPE} stroke="#86a6ff" strokeWidth="2" />
    </g>
    <EdgeGrip x={795} y={330.5} /><EdgeGrip x={795} y={578.5} />
    <EdgeGrip x={626.5} y={454} a={90} /><EdgeGrip x={963.5} y={454} a={90} /><EdgeGrip x={1044.5} y={454} a={90} />
    <EdgeGrip x={1375} y={360.5} a={5} /><EdgeGrip x={1543} y={484} a={-30} />
    <Grip x={626.5} y={330.5} /><Grip x={963.5} y={330.5} /><Grip x={626.5} y={578.5} /><Grip x={963.5} y={578.5} />
    <Grip x={1044.5} y={330.5} /><Grip x={1707.5} y={390.5} /><Grip x={1381.5} y={578.5} /><Grip x={1044.5} y={578.5} />
    <circle cx="1375.5" cy="454.5" r="7.5" fill="#0a7ff5" stroke="#3d6c9c" />

    <g stroke="#fff" fill="none">
      <path d="M1212.5 530V626M1164 578.5H1261" />
      <rect x="1210.5" y="575.5" width="4" height="6" fill="#2b4f9e" />
      <path d="M39.5 793V843.5H90" />
      <rect x="35.5" y="838.5" width="9" height="9" />
    </g>
    <g fill="none" stroke="#e8e8e8" strokeWidth="1.3">
      <path d="M94 829l13 13M107 829l-13 13M41 776l6.500 7 6.500-7M47.5 783v6" />
    </g>
  </Drawing>
);

const Compass = () => (
  <svg width="134" height="136" viewBox="0 0 134 136" role="img" aria-label="View cube">
    <circle cx="67" cy="66" r="54" fill="none" stroke="#414851" strokeWidth="13" />
    <rect x="41" y="41" width="51" height="51" fill="#afb2b2" />
    <rect x="51" y="51" width="31" height="31" fill="#a5adb5" />
    <g fontFamily="Liberation Sans, Arial, sans-serif" fontWeight="700" textAnchor="middle" fill="#bdbdbd" fontSize="20">
      <text x="67" y="18">N</text><text x="67" y="130">S</text><text x="11" y="74">W</text><text x="123" y="74">E</text>
      <text x="67" y="71" fontSize="12" fill="#4b5563">TOP</text>
    </g>
  </svg>
);

const NavIcons = () => (
  <svg width="32" height="212" viewBox="0 0 32 212" fill="none" stroke="#3e434a" aria-hidden="true">
    <circle cx="26" cy="5" r="3" /><circle cx="26" cy="206" r="3" />
    <path d="M16 20h11v11a11 11 0 1 1-11-11z" /><circle cx="16" cy="31" r="6" />
    <path d="M14 50h5l-2.5 3zM14 121l2.5-3 2 3zM14 158h5l-2.5 3z" fill="#3e434a" stroke="none" />
    <path d="M11 83c-2-5-6-8-7-10 1-2 4 0 6 3L8 65c1-3 3-1 4 1l1 7V62c2-3 4 0 4 2v9l2-10c3-1 3 2 3 3l-1 9 4-4c4 0 0 4-1 6-1 5-4 7-7 7h-4z" />
    <path d="M5 90l15 14M20 90L5 104M5 95v-5h5M15 90h5v5M5 99v5h5" /><circle cx="20" cy="104" r="5" /><path d="M24 108l4 4" strokeWidth="2.5" />
    <path d="M13 149v-17h-2l5-5 4 5h-2v17z" /><path d="M13 136C0 138 2 144 10 144M19 136c12 3 7 8 0 8" /><path d="M7 144l4-3v6z" fill="#3e434a" />
    <path d="M5 170h5v5H5zM13 170h5v5h-5zM21 170h5v5h-5zM5 179h15v13H5z" /><path d="M10 181v8l6-4z" fill="#3e434a" />
  </svg>
);

/* ---------- status icons ---------- */

const blue = "#3d9bff";
const GridIcon = () => (<Icon><path d="M4.5 1v16M8.5 1v16M12.5 1v16M1 4.5h16M1 8.5h16M1 12.5h16" stroke="#2f86f0" strokeWidth="1.5" /></Icon>);
const SnapIcon = () => (<Icon><path d="M2 2.5h14M2 6.5h14M2 10.5h14M2 14.5h14" stroke="#ccc" strokeDasharray="1 2" /></Icon>);
const OrthoIcon = () => (<Icon><path d="M3.5 3v12.5H17M3.5 11h5v4" /></Icon>);
const PolarIcon = () => (<Icon><circle cx="9" cy="9" r="7" stroke={blue} strokeWidth="1.5" /><path d="M9 9h8M9 9l5-5" stroke={blue} strokeWidth="1.5" /></Icon>);
const IsoIcon = () => (<Icon><path d="M1 1l16 16M9 1v16" stroke="#bbb" /></Icon>);
const TrackIcon = () => (<Icon><path d="M16 2L2 16h15" stroke={blue} strokeWidth="1.5" /><circle cx="9" cy="9" r="2" fill={blue} stroke="none" /></Icon>);
const OsnapIcon = () => (<Icon><rect x="4" y="4" width="12" height="12" stroke={blue} strokeWidth="1.5" /><rect x="1.5" y="1.5" width="5" height="5" fill="#0a3a0a" stroke="#3c4" /></Icon>);
const AnnoIcon = ({ c = "#d5d5d5", badge }: { c?: string; badge?: React.ReactNode }) => (
  <Icon><path d="M8 1l3 5v4l5 5v2l-5-2-3-3-3 3-4 2v-2l4-5V6z" fill={c} stroke="none" />{badge}</Icon>
);
const GearIcon = () => (<Icon><circle cx="9" cy="9" r="3" stroke="#ccc" strokeWidth="3" /><circle cx="9" cy="9" r="5.5" stroke="#ccc" strokeWidth="2" strokeDasharray="2.2 2.100" /></Icon>);
const ShapesIcon = () => (<Icon><rect x="2.5" y="2.5" width="6" height="6" /><circle cx="14" cy="8" r="3" /><path d="M9 10l3 6H6z" /></Icon>);
const PerfIcon = () => (<Icon><circle cx="9" cy="9" r="8" fill="#0c63b5" stroke={blue} /><path d="M7 12h3l3-4" stroke={blue} /></Icon>);
const ExpandIcon = () => (<Icon><rect x="1.5" y="3.5" width="15" height="12" /><path d="M4 10v3h3M4 13l3-3M14 9V6h-3M14 6l-3 3" strokeWidth="1.5" /></Icon>);
const ListIcon = () => (<Icon><path d="M1 4h16M1 9h16M1 14h16" stroke="#ccc" strokeWidth="2" /></Icon>);

const Status = () => (
  <StatusBar>
    <StatusGroup $w={50}><button>MODEL</button></StatusGroup>
    <StatusGroup $w={66}><GridIcon /><SnapIcon /><Caret $size={4} /></StatusGroup>
    <StatusGroup $w={104}><OrthoIcon /><PolarIcon /><Caret $size={4} /><IsoIcon /><Caret $size={4} /></StatusGroup>
    <StatusGroup $w={64}><TrackIcon /><OsnapIcon /><Caret $size={4} /></StatusGroup>
    <StatusGroup $w={108}>
      <AnnoIcon c={blue} badge={<circle cx="13" cy="4" r="2.5" stroke={blue} fill="#505050" />} />
      <AnnoIcon badge={<path d="M14 1l-2 4h4l-2 4" />} />
      <AnnoIcon />
      <button>1:1</button><Caret $size={4} />
    </StatusGroup>
    <StatusGroup $w={41}><GearIcon /><Caret $size={4} /></StatusGroup>
    <StatusGroup $w={26}><PlusIcon s={16} c="#ddd" /></StatusGroup>
    <StatusGroup $w={27}><ShapesIcon /></StatusGroup>
    <StatusGroup $w={28}><PerfIcon /></StatusGroup>
    <StatusGroup $w={49}><ExpandIcon /><ListIcon /></StatusGroup>
  </StatusBar>
);

/* ---------- red pen notes over the window ---------- */

const PenNotes = () => (
  <Ink aria-label="Pen notes">
    <InkText x="899 941 979 1018" y="57 53 52 52" fontSize="50">GONE</InkText>
    <path d="M1074 12C1075 30 1077 50 1078.5 66M1065 79L1070 72L1081 72L1080 78L1077 83L1068 76L1081 77" />
    <path d="M875 82L843 81C825 81 812 80 803 78L795 85C793 95 793 103 793 110C803 112 812 115 820 119C830 123 838 123 845 122L857 116C866 113 870 112 871 108L872 86L863 83" />
    <InkText x="1070 1110 1163 1206" y="536 537 541 544" fontSize="58">PHEW</InkText>
    <path d="M1299 483C1301 500 1299 515 1293 535C1288 560 1286 568 1281 577M1271 586L1274 585M1272 589L1289 588L1284 593L1284 600L1275 597L1275 590L1282 592L1279 600" />
  </Ink>
);

export default function App() {
  return (
    <Page>
      <Global />
      <TitleBar>
        <AppMenu aria-label="Application menu"><Logo /><Caret $color="#333" /></AppMenu>
        <QuickAccess>
          <IconButton aria-label="New"><NewIcon /></IconButton>
          <IconButton aria-label="Open"><OpenIcon /></IconButton>
          <IconButton aria-label="Save"><SaveIcon /></IconButton>
          <IconButton aria-label="Save as"><SaveAsIcon /></IconButton>
          <IconButton aria-label="Plot"><PrintIcon /></IconButton>
          <IconButton aria-label="Undo"><UndoIcon /></IconButton>
          <IconButton $w={12} aria-label="Undo list"><Caret /></IconButton>
          <IconButton aria-label="Redo"><UndoIcon flip c="#aaa" /></IconButton>
          <IconButton $w={12} aria-label="Redo list"><Caret $color="#ccc" /></IconButton>
          <IconButton $w={16} aria-label="Customize toolbar">
            <Icon s={10}><path d="M1 2h8" strokeWidth="1.5" /><path d="M1 4h8L5 8z" fill="#eee" stroke="none" /></Icon>
          </IconButton>
        </QuickAccess>
        <WindowTitle><span>Autodesk AutoCAD 2018</span><span>Drawing1.dwg</span></WindowTitle>
        <InfoCenter>
          <IconButton $w={14} aria-label="Collapse search"><Icon s={8}><path d="M2 0l4 4-4 4z" fill="#eee" stroke="none" /></Icon></IconButton>
          <SearchBox aria-label="Search" placeholder="Type a keyword or phrase" />
          <IconButton aria-label="Search help"><BinocularsIcon /></IconButton>
          <IconButton aria-label="Account"><PersonIcon /></IconButton>
          <SignIn>Sign In<Caret /></SignIn>
          <IconButton $w={34} aria-label="App store"><CartIcon /></IconButton>
          <IconButton $w={18} aria-label="Autodesk A360"><A360Icon /></IconButton>
          <IconButton $w={12} aria-label="A360 list"><Caret /></IconButton>
          <IconButton $w={8} aria-hidden="true" as="span"><Rule /></IconButton>
          <IconButton $w={28} aria-label="Help"><HelpIcon /></IconButton>
          <IconButton $w={6} aria-label="Help list"><Caret /></IconButton>
        </InfoCenter>
        <WindowControls>
          <button aria-label="Minimize"><MinIcon c="#888" /></button>
          <button aria-label="Restore"><RestoreIcon c="#888" /></button>
          <button aria-label="Close"><CrossIcon c="#888" sw={1} /></button>
        </WindowControls>
      </TitleBar>

      <MenuBar>
        {menus.map(([name, w]) => <TextButton key={name} $w={w}>{name}</TextButton>)}
        <MdiControls>
          <IconButton $w={17} aria-label="Minimize drawing"><MinIcon c="#222" sw={2} /></IconButton>
          <IconButton $w={17} aria-label="Restore drawing"><RestoreIcon c="#222" sw={1.5} /></IconButton>
          <IconButton $w={15} aria-label="Close drawing"><CrossIcon c="#222" /></IconButton>
        </MdiControls>
      </MenuBar>

      <TabRow>
        {tabs.map(([name, w], i) => <RibbonTab key={name} $w={w} $active={i === 0}>{name}</RibbonTab>)}
        <RibbonToggle aria-label="Minimize ribbon">
          <Icon w={13} h={8}><rect width="13" height="8" rx="2" fill="#eee" stroke="none" /><path d="M4 5.5L6.5 3 9 5.5z" fill="#333" stroke="none" /></Icon>
          <Caret />
        </RibbonToggle>
      </TabRow>

      <RibbonPanels />

      <DocTabs>
        <DocTab>Start</DocTab>
        <DocTab $active>Drawing1*<CrossIcon c="#444" s={10} /></DocTab>
        <AddTab aria-label="New drawing"><PlusIcon /></AddTab>
      </DocTabs>

      <Workspace>
        <Canvas>
          <ModelSpace />
          <ViewControls><button>[−]</button><button>[Top]</button><button>[2D Wireframe]</button></ViewControls>
          <ViewCube>
            <Compass />
            <WcsButton>WCS<Caret $color="#a9adb5" /></WcsButton>
          </ViewCube>
          <NavBar><NavIcons /></NavBar>
        </Canvas>
        <Backdrop />
      </Workspace>

      <CommandLine>
        <CommandGrip>
          <Icon w={17} h={6}><path d="M0 1h17M0 4h17" stroke="#aaa" strokeWidth="2" strokeDasharray="2 1" /></Icon>
          <button aria-label="Close command line"><CrossIcon /></button>
          <button aria-label="Customize">
            <Icon s={16}><path d="M5 5l8 9" strokeWidth="3" stroke="#fff" /><path d="M6 1a4 4 0 1 1-5 5l3 1 3-3z" fill="#fff" stroke="none" /></Icon>
          </button>
        </CommandGrip>
        <CommandBody>
          <History>Specify stretch point or [Base point/Copy/Undo/eXit]:</History>
          <Prompt>
            <Icon w={15} h={14}><rect x=".5" y=".5" width="14" height="13" rx="1" fill="#e3e6ec" stroke="#8a8f99" /><path d="M3 4l4 3-4 3M8 11h4" stroke="#223" strokeWidth="1.3" /></Icon>
            <Caret $color="#888" />
            <input placeholder="Type a command" aria-label="Command" />
          </Prompt>
        </CommandBody>
      </CommandLine>

      <Footer>
        <LayoutTab $active>Model</LayoutTab>
        <LayoutTab>Layout1</LayoutTab>
        <LayoutTab>Layout2</LayoutTab>
        <AddTab $flip aria-label="New layout"><PlusIcon /></AddTab>
        <Status />
      </Footer>

      <PenNotes />
    </Page>
  );
}
